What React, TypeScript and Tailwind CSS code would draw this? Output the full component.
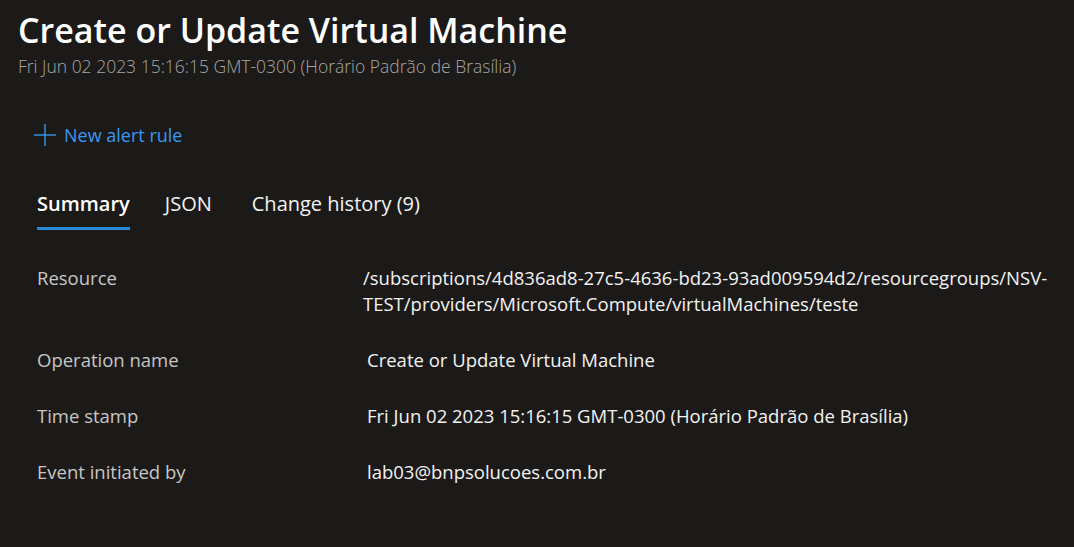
const rows = [
  { label: "Operation name", value: "Create or Update Virtual Machine" },
  { label: "Time stamp", value: "Fri Jun 02 2023 15:16:15 GMT-0300 (Horário Padrão de Brasília)" },
  { label: "Event initiated by", value: "lab03@bnpsolucoes.com.br" },
]

const tabs = [
  { label: "Summary", cls: "" },
  { label: "JSON", cls: "ml-[35px]" },
  { label: "Change history (9)", cls: "ml-[40px]" },
]

function PlusIcon() {
  return (
    <svg width="22" height="22" viewBox="0 0 22 22" fill="none" stroke="currentColor" strokeWidth="1.4">
      <line x1="11" y1="0" x2="11" y2="22" />
      <line x1="0" y1="11" x2="22" y2="11" />
    </svg>
  )
}

export default function App() {
  return (
    <div
      className="min-h-screen w-full bg-[#1b1a19] text-[#f3f2f1]"
      style={{ fontFamily: "'Open Sans', 'Noto Sans', sans-serif" }}
    >
      <div className="pl-[18px] pt-[10px]">
        <h1 className="text-[34px] font-semibold leading-[40px] text-white">
          Create or Update Virtual Machine
        </h1>
        <p className="mt-[5px] text-[17.5px] font-light leading-[22px] text-[#a8a6a4]">
          Fri Jun 02 2023 15:16:15 GMT-0300 (Horário Padrão de Brasília)
        </p>
      </div>

      <div className="pl-[34px] pt-[46px]">
        <button className="flex items-center gap-[8px] text-[18px] leading-[24px] text-[#3a96f0]">
          <PlusIcon />
          New alert rule
        </button>
      </div>

      <div className="flex pl-[37px] pt-[43px]">
        {tabs.map((t, i) => (
          <div key={t.label} className={"flex flex-col " + t.cls}>
            <span
              className={
                i === 0
                  ? "text-[20px] font-semibold leading-[28px] text-white"
                  : "text-[20px] leading-[28px] text-[#f3f2f1]"
              }
            >
              {t.label}
            </span>
            <div className={i === 0 ? "mt-[9px] h-[3px] bg-[#2b88d8]" : "mt-[9px] h-[3px]"} />
          </div>
        ))}
      </div>

      <div className="pl-[37px] pt-[34.5px] text-[18.5px] leading-[26px]">
        <div className="flex">
          <div className="w-[326px] shrink-0 text-[#c8c6c4]">Resource</div>
          <div className="text-[#f3f2f1]">
            /subscriptions/4d836ad8-27c5-4636-bd23-93ad009594d2/resourcegroups/NSV-
            <br />
            TEST/providers/Microsoft.Compute/virtualMachines/teste
          </div>
        </div>
        {rows.map((r) => (
          <div key={r.label} className="mt-[30px] flex">
            <div className="w-[330px] shrink-0 text-[#c8c6c4]">{r.label}</div>
            <div className="text-[#f3f2f1]">{r.value}</div>
          </div>
        ))}
      </div>
    </div>
  )
}
